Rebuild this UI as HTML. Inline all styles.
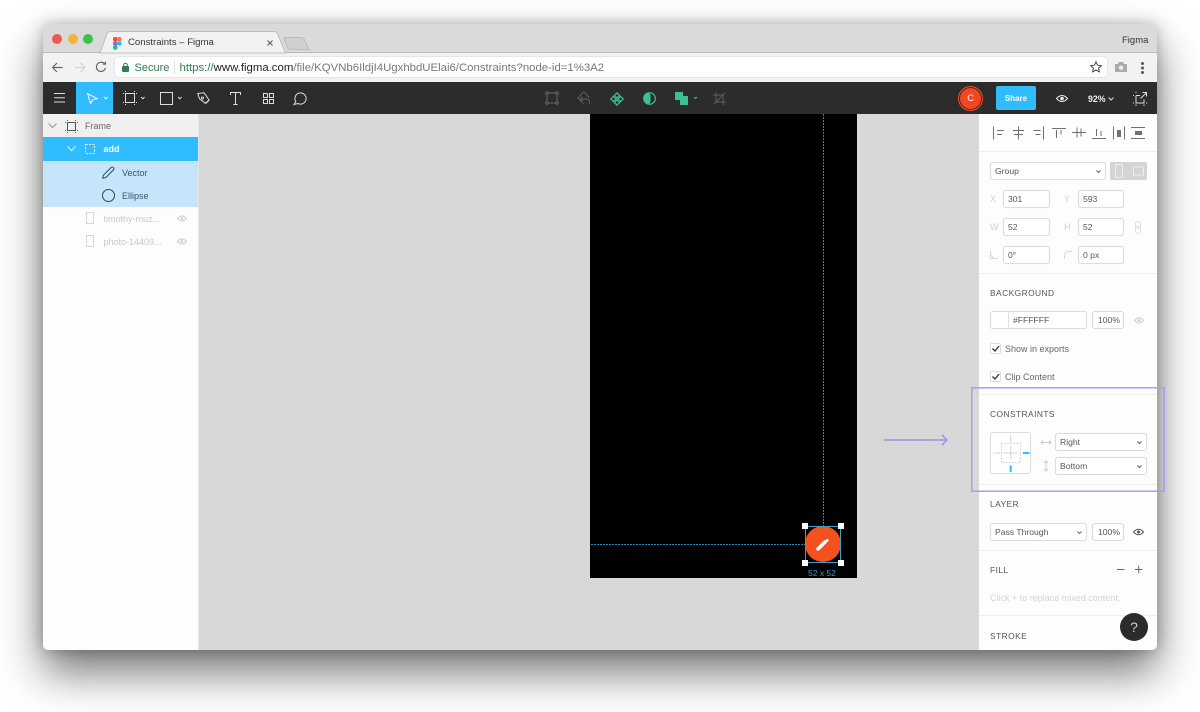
<!DOCTYPE html>
<html><head><meta charset="utf-8"><title>Constraints – Figma</title>
<style>
html,body{margin:0;padding:0;background:#fff}
body{width:1200px;height:712px;position:relative;overflow:hidden;font-family:"Liberation Sans",sans-serif}
#w{position:absolute;left:0;top:0;width:1200px;height:712px;overflow:hidden;background:#fff;filter:blur(.35px)}
.a{position:absolute}
.t{position:absolute;white-space:nowrap;font-size:9px;line-height:12px;color:#4a4a4a}
.box{position:absolute;box-sizing:border-box;border:1px solid #dcdcdc;border-radius:3px;background:#fff;font-size:8.6px;color:#555;line-height:17px;padding-left:4px;white-space:nowrap;box-shadow:0 0 1px rgba(0,0,0,.1)}
.hr{position:absolute;left:979px;width:178px;height:1px;background:#f0f0f0}
.h{position:absolute;white-space:nowrap;font-size:8.4px;letter-spacing:.45px;line-height:12px;color:#555}
.lb{position:absolute;font-size:9px;line-height:12px;color:#d0d0d0}
svg{position:absolute;overflow:visible}
</style></head><body><div id="w">
<div class="a" style="left:43px;top:24px;width:1114px;height:626px;border-radius:5px;background:#d8d8d8;box-shadow:0 22px 44px rgba(0,0,0,.55),0 0 14px rgba(0,0,0,.24)"></div>
<div class="a" style="left:43px;top:24px;width:1114px;height:626px;border-radius:5px;overflow:hidden;background:#d8d8d8">
 <div class="a" style="left:0;top:0;width:1114px;height:29px;background:#dadada;border-bottom:1px solid #b8b8b8;box-sizing:border-box"></div>
 <div class="a" style="left:0;top:29px;width:1114px;height:29px;background:#f2f2f2"></div>
 <div class="a" style="left:0;top:58px;width:1114px;height:32px;background:#2c2c2c"></div>
</div>
<!-- traffic lights -->
<div class="a" style="left:52px;top:34px;width:10px;height:10px;border-radius:50%;background:#ef5a50"></div>
<div class="a" style="left:68px;top:34px;width:10px;height:10px;border-radius:50%;background:#f3b33a"></div>
<div class="a" style="left:83px;top:34px;width:10px;height:10px;border-radius:50%;background:#3cc14a"></div>
<!-- tab -->
<svg style="left:0;top:0" width="320" height="60"><path d="M100 53 L107 33.500 Q108 31.500 111 31.500 L274 31.500 Q276.500 31.500 277.500 33.500 L285.500 53 Z" fill="#f2f2f2" stroke="#bdbdbd"/><path d="M285 37.500 L301 37.500 Q303 37.500 304 39 L309 49.500 L291 49.500 Q289 49.500 288 48 L284 39 Q284 37.500 285 37.500Z" fill="#d0d0d0" stroke="#bbb"/></svg>
<svg style="left:113px;top:37px" width="9" height="13"><rect x="0" y="0" width="4.500" height="4.400" rx="2" fill="#f24e1e"/><rect x="4" y="0" width="4.500" height="4.400" rx="2" fill="#ff7262"/><rect x="0" y="4.200" width="4.500" height="4.400" rx="2" fill="#a259ff"/><circle cx="6.400" cy="6.400" r="2.200" fill="#1abcfe"/><rect x="0" y="8.400" width="4.500" height="4.400" rx="2" fill="#0acf83"/></svg>
<div class="t" style="left:128px;top:36.500px;font-size:9.600px;color:#333">Constraints – Figma</div>
<svg style="left:267px;top:39.500px" width="7" height="7"><path d="M.5.500l5 5m0-5l-5 5" stroke="#555" stroke-width="1"/></svg>
<div class="t" style="left:1122px;top:34.500px;font-size:9.500px;color:#333">Figma</div>
<!-- address bar -->
<svg style="left:52px;top:61px" width="60" height="14" fill="none"><path d="M.5 6.500h10M.5 6.500l4.500-4.500M.5 6.500l4.500 4.500" stroke="#666" stroke-width="1.200"/><path d="M33 6.500H23M33 6.500l-4.500-4.500M33 6.500l-4.500 4.500" stroke="#d4d4d4" stroke-width="1.200"/></svg>
<svg style="left:95px;top:61px" width="12" height="12" fill="none"><path d="M10 3.500A4.600 4.600 0 1 0 10.500 7" stroke="#666" stroke-width="1.200"/><path d="M7.500 3.800h3.500V.3z" fill="#666"/></svg>
<div class="a" style="left:115px;top:57px;width:992px;height:20px;background:#fff;border-radius:3px;box-shadow:0 0 1px rgba(0,0,0,.3)"></div>
<svg style="left:121px;top:62px" width="9" height="10"><rect x="1" y="4" width="7" height="6" rx="1" fill="#2e7d4f"/><path d="M2.700 4.500V3a1.800 1.800 0 0 1 3.600 0v1.500" fill="none" stroke="#2e7d4f"/></svg>
<div class="t" style="left:134.500px;top:62px;font-size:11px;color:#2e7d4f">Secure</div>
<div class="a" style="left:174px;top:60px;width:1px;height:14px;background:#e4e4e4"></div>
<div class="t" style="left:179.500px;top:62px;font-size:11.390px;color:#777"><span style="color:#2e7d4f">https://</span><span style="color:#222">www.figma.com</span>/file/KQVNb6IldjI4UgxhbdUElai6/Constraints?node-id=1%3A2</div>
<svg style="left:1090px;top:61px" width="12" height="12"><path d="M6 .8l1.600 3.400 3.700.5-2.700 2.500.7 3.600L6 9l-3.300 1.800.7-3.600L.7 4.700l3.700-.5z" fill="none" stroke="#444"/></svg>
<svg style="left:1115px;top:62px" width="12" height="10"><path d="M0 2h3l1-2h4l1 2h3v8H0z" fill="#aaa"/><circle cx="6" cy="5.700" r="2.200" fill="#eee"/></svg>
<div class="a" style="left:1141px;top:62px;width:3px;height:3px;border-radius:50%;background:#555;box-shadow:0 4.500px 0 #555,0 9px 0 #555"></div>
<!-- toolbar -->
<div class="a" style="left:76px;top:82px;width:37px;height:32px;background:#30bdff"></div>
<svg style="left:54px;top:93px" width="12" height="10"><path d="M0 .5h11M0 4.700h11M0 9h11" stroke="#ddd"/></svg>
<svg style="left:87px;top:93px" width="22" height="11" fill="none"><path d="M.7.700l9.500 5-4.300 1L3.500 10.500z" stroke="#fff"/><path d="M17 4l1.800 1.800L20.600 4" stroke="#fff"/></svg>
<svg style="left:123px;top:91px" width="25" height="14" fill="none" stroke="#ddd"><rect x="2.500" y="2.500" width="9" height="9"/><path d="M0 2.500h1M13 2.500h1M0 11.500h1M13 11.500h1M2.500 0v1M11.500 0v1M2.500 13v1M11.500 13v1"/><path d="M18 6l1.800 1.800L21.600 6"/></svg>
<svg style="left:160px;top:92px" width="25" height="13" fill="none"><rect x=".5" y=".5" width="12" height="12" stroke="#ddd"/><path d="M18 5l1.800 1.800L21.600 5" stroke="#ddd"/></svg>
<svg style="left:197px;top:92px" width="13" height="13" fill="none" stroke="#ddd"><path d="M.8 1.500L7 .8l5 7-3.500 3.500-6-4.500z"/><circle cx="5.500" cy="6" r="1"/><path d="M8.500 11.800l3.800-3.800"/></svg>
<svg style="left:230px;top:92px" width="12" height="13" fill="none" stroke="#ddd"><path d="M.5 3V.5h10V3M5.500 .5v12M3.300 12.500h4.400"/></svg>
<svg style="left:263px;top:93px" width="12" height="12" fill="none" stroke="#ddd"><rect x=".5" y=".5" width="4" height="4"/><rect x="6.500" y=".5" width="4" height="4"/><rect x=".5" y="6.500" width="4" height="4"/><rect x="6.500" y="6.500" width="4" height="4"/></svg>
<svg style="left:293px;top:92px" width="14" height="13" fill="none" stroke="#ddd"><path d="M1 12.500l1.800-3A5.600 5.600 0 1 1 5 11.500z"/></svg>
<svg style="left:545px;top:91px" width="14" height="14" fill="none" stroke="#666"><rect x="2" y="2" width="10" height="10" rx="1"/><circle cx="2" cy="2" r="1.300" fill="#2c2c2c"/><circle cx="12" cy="2" r="1.300" fill="#2c2c2c"/><circle cx="2" cy="12" r="1.300" fill="#2c2c2c"/><circle cx="12" cy="12" r="1.300" fill="#2c2c2c"/></svg>
<svg style="left:577px;top:91px" width="15" height="15" fill="none" stroke="#5e5e5e"><path d="M6.500.8L.8 7l5.700 5.800M6.500.8l6 6M5.500 5.500L3.500 8l2.500 2M3.500 8h6c2 0 3 1.500 3 3.500v2"/></svg>
<svg style="left:610px;top:92px" width="14" height="14" fill="none" stroke="#3cc08f" stroke-width="1.200"><path d="M7 .8l2.600 2.600L7 6 4.400 3.400zM3.400 4.400L6 7 3.400 9.600.8 7zM10.600 4.400L13.200 7l-2.600 2.600L8 7zM7 8l2.600 2.600L7 13.200l-2.600-2.600z"/></svg>
<svg style="left:643px;top:92px" width="14" height="14"><circle cx="6.500" cy="6.500" r="5.800" fill="none" stroke="#3cc08f" stroke-width="1.200"/><path d="M6.500 1a5.500 5.500 0 0 0 0 11 8 8 0 0 0 1-5.500A8 8 0 0 0 6.500 1z" fill="#3cc08f"/></svg>
<svg style="left:675px;top:92px" width="24" height="14"><path d="M0 0h8v4h5v9H5V8H0z" fill="#3cc08f"/><path d="M19 5l1.500 1.500L22 5" fill="none" stroke="#3cc08f"/></svg>
<svg style="left:713px;top:92px" width="13" height="13" fill="none" stroke="#5e5e5e"><path d="M3 0v10h10M0 3h10v10M1 12L12 1"/></svg>
<div class="a" style="left:958px;top:86px;width:25px;height:25px;box-sizing:border-box;border-radius:50%;background:#f24822;border:1px solid #f24822;box-shadow:inset 0 0 0 1px #2c2c2c"></div>
<div class="t" style="left:958px;top:92px;width:25px;text-align:center;color:#fff;font-size:9px">C</div>
<div class="a" style="left:996px;top:86px;width:40px;height:24px;border-radius:2px;background:#30bdff;color:#fff;font-size:8px;font-weight:bold;line-height:25px;text-align:center">Share</div>
<svg style="left:1056px;top:94px" width="12" height="9" fill="none"><path d="M.5 4.500Q6-1.500 11.500 4.500 6 10.500.5 4.500Z" stroke="#eee"/><circle cx="6" cy="4.500" r="1.800" fill="#eee"/></svg>
<div class="t" style="left:1088px;top:93px;color:#eee;font-size:8.800px;font-weight:bold">92%</div>
<svg style="left:1108px;top:97px" width="6" height="4" fill="none"><path d="M.5.500L3 3 5.500.5" stroke="#ddd"/></svg>
<svg style="left:1133px;top:92px" width="15" height="14" fill="none" stroke="#ddd"><path d="M3 3.500h4M3 3.500v7.500h8V7.500M0 3.500h1M3 0v1M0 11h1M13 11h1M3 12.500V14M11 12.500V14M7.500 6.500L13.500.7M9.500.5h4v4"/></svg>
<!-- left panel -->
<div class="a" style="left:43px;top:114px;width:155px;height:536px;background:#fdfdfd;border-right:1px solid #e4e4e4;border-radius:0 0 0 5px"></div>
<div class="a" style="left:43px;top:114px;width:155px;height:23px;background:#f0f0f0"></div>
<div class="a" style="left:43px;top:137px;width:155px;height:24px;background:#30bdff"></div>
<div class="a" style="left:43px;top:161px;width:155px;height:46px;background:#c7e5fa"></div>
<svg style="left:48px;top:123px" width="9" height="6" fill="none"><path d="M.5.500L4.500 4.500 8.500.5" stroke="#999"/></svg>
<svg style="left:65px;top:120px" width="13" height="13" fill="none" stroke="#555"><rect x="2.500" y="2.500" width="8" height="8"/><path d="M0 2.500h1M12 2.500h1M0 10.500h1M12 10.500h1M2.500 0v1M10.500 0v1M2.500 12v1M10.500 12v1"/></svg>
<div class="t" style="left:85px;top:120px;color:#666">Frame</div>
<svg style="left:67px;top:146px" width="9" height="6" fill="none"><path d="M.5.500L4.500 4.500 8.500.5" stroke="#fff"/></svg>
<svg style="left:85px;top:144px" width="10" height="10" fill="none"><rect x=".5" y=".5" width="9" height="9" stroke="#fff" stroke-dasharray="2 1.500"/></svg>
<div class="t" style="left:103.500px;top:143px;color:#fff;font-weight:bold">add</div>
<svg style="left:102px;top:166px" width="13" height="13" fill="none" stroke="#234a63"><path d="M.8 12.200l.6-3L9 1.600a1.500 1.500 0 0 1 2.400 2.400L3.800 11.600z"/></svg>
<div class="t" style="left:122px;top:166.500px;color:#33566e">Vector</div>
<svg style="left:102px;top:189px" width="13" height="13" fill="none" stroke="#234a63"><circle cx="6.500" cy="6.500" r="6"/></svg>
<div class="t" style="left:122px;top:189.500px;color:#33566e">Ellipse</div>
<svg style="left:86px;top:212px" width="8" height="12" fill="none" stroke="#d8d8d8"><rect x=".5" y=".5" width="7" height="11"/></svg>
<div class="t" style="left:103.500px;top:212.500px;color:#c8c8c8">timothy-muz...</div>
<svg style="left:177px;top:215px" width="10" height="7" fill="none"><path d="M.5 3.500Q5-1.500 9.500 3.500 5 8.500.5 3.500Z" stroke="#ccc"/><circle cx="5" cy="3.500" r="1.300" fill="#ccc"/></svg>
<svg style="left:86px;top:235px" width="8" height="12" fill="none" stroke="#d8d8d8"><rect x=".5" y=".5" width="7" height="11"/></svg>
<div class="t" style="left:103.500px;top:235.500px;color:#c8c8c8">photo-14409...</div>
<svg style="left:177px;top:238px" width="10" height="7" fill="none"><path d="M.5 3.500Q5-1.500 9.500 3.500 5 8.500.5 3.500Z" stroke="#ccc"/><circle cx="5" cy="3.500" r="1.300" fill="#ccc"/></svg>
<!-- canvas -->
<div class="a" style="left:590px;top:114px;width:267px;height:464px;background:#000"></div>
<div class="a" style="left:822.500px;top:114px;width:1px;height:412px;background:repeating-linear-gradient(to bottom,#2a86b8 0 2px,transparent 2px 3px)"></div>
<div class="a" style="left:591px;top:544px;width:214px;height:1px;background:repeating-linear-gradient(to right,#2a86b8 0 2px,transparent 2px 3px)"></div>
<div class="a" style="left:805px;top:526px;width:36px;height:36px;border-radius:50%;background:#f4511e"></div>
<div class="a" style="left:805px;top:526px;width:36px;height:37px;box-sizing:border-box;border:1px solid #3f9fcc"></div>
<svg style="left:815px;top:536px" width="16" height="16"><path d="M3 13L10 6" stroke="#fff" stroke-width="3.600" stroke-linecap="round"/><path d="M11.300 3.500l1.800 1.800" stroke="#fff" stroke-width="2.500"/></svg>
<div class="a" style="left:802px;top:523px;width:6px;height:6px;background:#fff"></div>
<div class="a" style="left:838px;top:523px;width:6px;height:6px;background:#fff"></div>
<div class="a" style="left:802px;top:560px;width:6px;height:6px;background:#fff"></div>
<div class="a" style="left:838px;top:560px;width:6px;height:6px;background:#fff"></div>
<div class="t" style="left:808px;top:567px;color:#3c97c9;font-size:8.500px">52 x 52</div>
<!-- right panel -->
<div class="a" style="left:979px;top:114px;width:178px;height:536px;background:#fdfdfd;border-radius:0 0 5px 0;overflow:hidden"></div>
<div class="hr" style="top:151px"></div>
<svg style="left:985px;top:118px" width="170" height="30" fill="none" stroke="#707070">
<g transform="translate(-985 -118)">
<path d="M993.500 126.500v13M997 130.500h7M997 134.500h5"/>
<path d="M1018.500 126.500v13M1013 130.500h11M1014 134.500h9"/>
<path d="M1043.500 126.500v13M1033.500 130.500h7M1035.500 134.500h5"/>
<path d="M1052 128.500h14M1056.500 130v8M1061 130v4.500" />
<path d="M1072 132.500h14M1077 127.500v10M1081 128.500v8"/>
<path d="M1092 138.500h14M1096.500 129v7M1101 131v5"/>
<path d="M1113.500 126.500v13M1124.500 126.500v13"/><rect x="1117.500" y="130.500" width="3" height="6" fill="#707070"/>
<path d="M1131 127.500h14M1131 138.500h14"/><rect x="1135.500" y="131.500" width="6" height="3" fill="#707070"/>
</g></svg>
<div class="box" style="left:990px;top:162px;width:116px;height:18px">Group</div>
<svg style="left:1096px;top:169.500px" width="5" height="4" fill="none"><path d="M.5.500L2.500 2.500 4.500.5" stroke="#666"/></svg>
<div class="a" style="left:1110px;top:162px;width:37px;height:18px;background:#d4d4d4;border-radius:2px"></div>
<svg style="left:1115px;top:164px" width="29" height="14" fill="none" stroke="#eee"><rect x=".5" y=".5" width="7" height="13"/><rect x="18.500" y="3" width="10" height="8"/></svg>
<div class="lb" style="left:990px;top:193px">X</div><div class="box" style="left:1003px;top:190px;width:47px;height:18px">301</div>
<div class="lb" style="left:1064px;top:193px">Y</div><div class="box" style="left:1078px;top:190px;width:46px;height:18px">593</div>
<div class="lb" style="left:990px;top:221px">W</div><div class="box" style="left:1003px;top:218px;width:47px;height:18px">52</div>
<div class="lb" style="left:1064px;top:221px">H</div><div class="box" style="left:1078px;top:218px;width:46px;height:18px">52</div>
<svg style="left:1134px;top:221px" width="8" height="13" fill="none" stroke="#ddd"><rect x="1.500" y=".5" width="5" height="7" rx="2.500"/><rect x="1.500" y="5.500" width="5" height="7" rx="2.500"/></svg>
<svg style="left:990px;top:251px" width="8" height="8" fill="none" stroke="#d8d8d8"><path d="M.5 0v7.500H8M.5 3.500L4 7.500"/></svg>
<div class="box" style="left:1003px;top:246px;width:47px;height:18px">0°</div>
<svg style="left:1064px;top:251px" width="8" height="8" fill="none" stroke="#d8d8d8"><path d="M.5 8V5Q.5.500 5 .5h3"/></svg>
<div class="box" style="left:1078px;top:246px;width:46px;height:18px">0 px</div>
<div class="hr" style="top:273px"></div>
<div class="h" style="left:990px;top:287px">BACKGROUND</div>
<div class="box" style="left:990px;top:311px;width:97px;height:18px;padding-left:22px">#FFFFFF</div>
<div class="a" style="left:1008px;top:312px;width:1px;height:16px;background:#e2e2e2"></div>
<div class="box" style="left:1092px;top:311px;width:32px;height:18px;padding-left:5px">100%</div>
<svg style="left:1134px;top:317px" width="10" height="7" fill="none"><path d="M.5 3.500Q5-1.500 9.500 3.500 5 8.500.5 3.500Z" stroke="#ccc"/><circle cx="5" cy="3.500" r="1.300" fill="#ccc"/></svg>
<div class="a" style="left:990px;top:343px;width:9px;height:9px;border:1px solid #ddd;border-radius:2px;background:#fff"></div>
<svg style="left:992px;top:345px" width="8" height="7" fill="none"><path d="M.5 3.500L3 6 7 1" stroke="#333" stroke-width="1.400"/></svg>
<div class="t" style="left:1005px;top:343px;color:#666">Show in exports</div>
<div class="a" style="left:990px;top:371px;width:9px;height:9px;border:1px solid #ddd;border-radius:2px;background:#fff"></div>
<svg style="left:992px;top:373px" width="8" height="7" fill="none"><path d="M.5 3.500L3 6 7 1" stroke="#333" stroke-width="1.400"/></svg>
<div class="t" style="left:1005px;top:371px;color:#666">Clip Content</div>
<div class="hr" style="top:394px"></div>
<div class="h" style="left:990px;top:408px">CONSTRAINTS</div>
<div class="a" style="left:990px;top:432px;width:41px;height:42px;box-sizing:border-box;border:1px solid #dcdcdc;border-radius:3px;background:#fff"></div>
<svg style="left:990px;top:432px" width="41" height="42" fill="none"><rect x="11.500" y="11.500" width="19" height="19" stroke="#ccc" stroke-dasharray="1.500 1.500"/><path d="M20.700 3.500v7M20.700 14v13M3 21h7M13 21h15" stroke="#d4d4d4"/><path d="M33 21h6.500" stroke="#30bdff" stroke-width="2"/><path d="M20.700 33.500v6.500" stroke="#30bdff" stroke-width="2"/></svg>
<svg style="left:1041px;top:438px" width="10" height="34" fill="none" stroke="#ccc"><path d="M0 4.500h10M2 2.500l-2 2 2 2M8 2.500l2 2-2 2"/><path d="M5 23v10M3 25l2-2 2 2M3 31l2 2 2-2"/></svg>
<div class="box" style="left:1055px;top:433px;width:92px;height:18px">Right</div>
<svg style="left:1137px;top:440.500px" width="5" height="4" fill="none"><path d="M.5.500L2.500 2.500 4.500.5" stroke="#666"/></svg>
<div class="box" style="left:1055px;top:457px;width:92px;height:18px">Bottom</div>
<svg style="left:1137px;top:464.500px" width="5" height="4" fill="none"><path d="M.5.500L2.500 2.500 4.500.5" stroke="#666"/></svg>
<div class="hr" style="top:484px"></div>
<div class="h" style="left:990px;top:498px">LAYER</div>
<div class="box" style="left:990px;top:523px;width:97px;height:18px">Pass Through</div>
<svg style="left:1077px;top:530.500px" width="5" height="4" fill="none"><path d="M.5.500L2.500 2.500 4.500.5" stroke="#666"/></svg>
<div class="box" style="left:1092px;top:523px;width:32px;height:18px;padding-left:5px">100%</div>
<svg style="left:1133px;top:528px" width="11" height="8" fill="none"><path d="M.5 4Q5.500-1.500 10.500 4 5.500 9.500.5 4Z" stroke="#555"/><circle cx="5.500" cy="4" r="1.500" fill="#555"/></svg>
<div class="hr" style="top:550px"></div>
<div class="h" style="left:990px;top:564px">FILL</div>
<svg style="left:1117px;top:565px" width="26" height="9" fill="none" stroke="#666"><path d="M0 4.500h7.500M18 4.500h7.500M21.700 .7v7.600"/></svg>
<div class="t" style="left:990px;top:592px;color:#d4d4d4">Click + to replace mixed content.</div>
<div class="hr" style="top:615px"></div>
<div class="h" style="left:990px;top:630px">STROKE</div>
<div class="a" style="left:1120px;top:613px;width:28px;height:28px;border-radius:50%;background:#2b2b2b;color:#ccc;font-size:14px;line-height:28px;text-align:center">?</div>
<!-- annotations -->
<svg style="left:971px;top:387px" width="194" height="105" fill="none"><rect x=".8" y=".8" width="192.400" height="103.400" stroke="#a89de8" stroke-width="1.500"/></svg>
<svg style="left:884px;top:434px" width="64" height="12" fill="none" stroke="#9c8fe8" stroke-width="1.500"><path d="M0 6h63M58 1l5 5-5 5"/></svg>
</div></body></html>
